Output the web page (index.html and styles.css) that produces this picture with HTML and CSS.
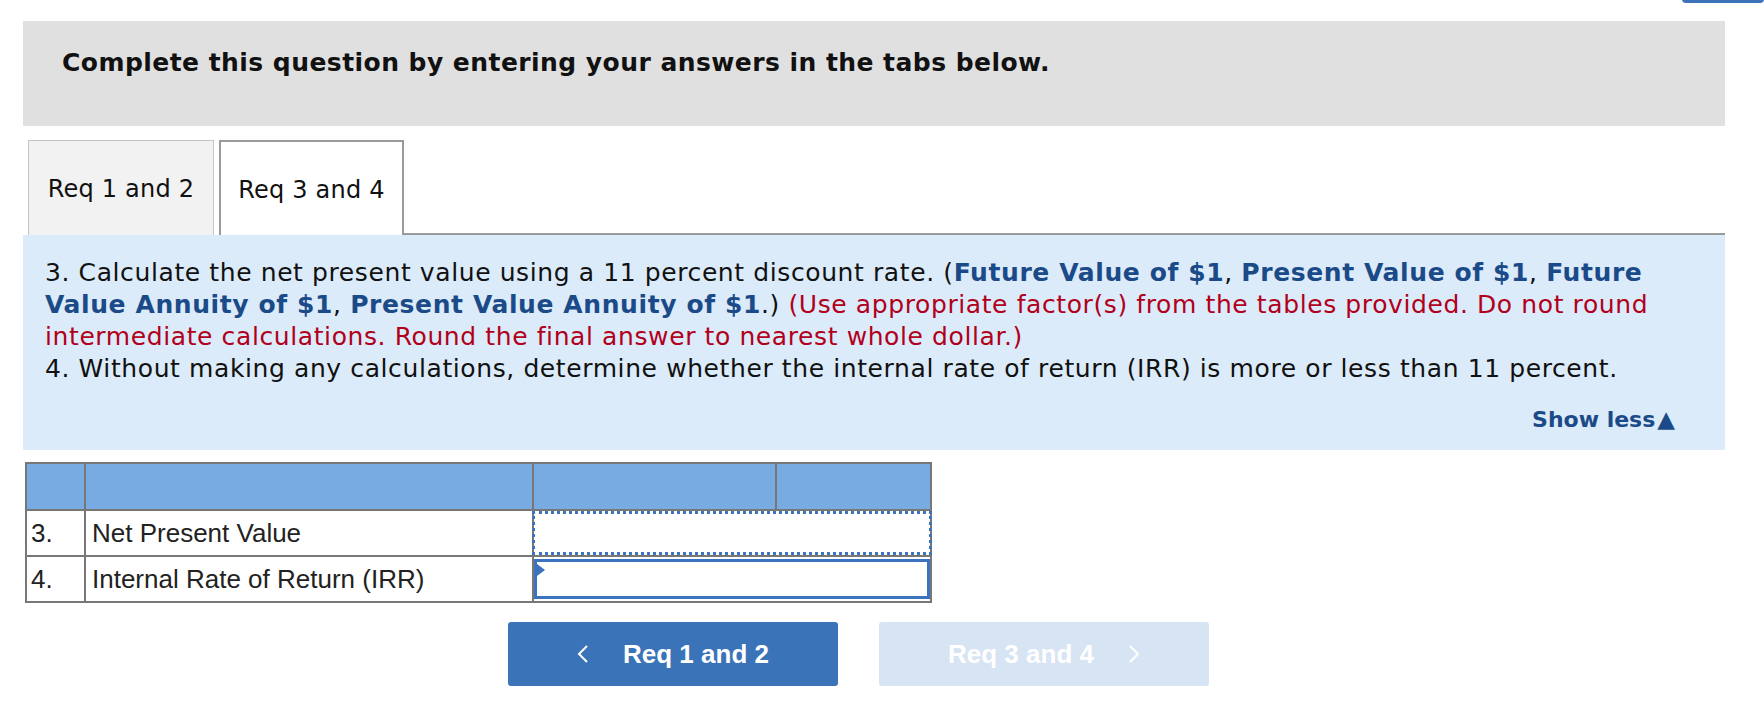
FILE: index.html
```html
<!DOCTYPE html>
<html lang="en">
<head>
    <meta charset="UTF-8">
    <title>Req 3 and 4</title>
    <link rel="stylesheet" href="styles.css">
</head>
<body>

    <!-- Corner of the toolbar button above -->
    <div class="corner-btn"></div>

    <div class="page">

        <!-- Instructions -->
        <div class="instructions">
            Complete this question by entering your answers in the tabs below.
        </div>

        <!-- Tabs -->
        <div class="tabs">
            <div class="tab">Req 1 and 2</div>
            <div class="tab active">Req 3 and 4</div>
            <div class="tab-fill"></div>
        </div>

        <!-- Question text -->
        <div class="question">
            <p>3. Calculate the net present value using a 11 percent discount rate. (<b class="link">Future Value of $1</b>, <b class="link">Present Value of $1</b>, <b class="link">Future<br>Value Annuity of $1</b>, <b class="link">Present Value Annuity of $1</b>.) <span class="hint">(Use appropriate factor(s) from the tables provided. Do not round<br>intermediate calculations. Round the final answer to nearest whole dollar.)</span></p>
            <p>4. Without making any calculations, determine whether the internal rate of return (IRR) is more or less than 11 percent.</p>
            <div class="show-less">Show less<span class="arrow">&#9650;</span></div>
        </div>

        <!-- Answer table -->
        <table class="answers">
            <tr class="head">
                <td class="c-num"></td>
                <td class="c-label"></td>
                <td class="c-val"></td>
                <td class="c-extra"></td>
            </tr>
            <tr>
                <td class="c-num">3.</td>
                <td class="c-label">Net Present Value</td>
                <td class="c-input" colspan="2"><div class="field focused"></div></td>
            </tr>
            <tr>
                <td class="c-num">4.</td>
                <td class="c-label">Internal Rate of Return (IRR)</td>
                <td class="c-input" colspan="2"><div class="field selected"></div></td>
            </tr>
        </table>

        <!-- Navigation -->
        <div class="nav">
            <button class="nav-btn prev">
                <svg width="12" height="20" viewBox="0 0 12 20"><polyline points="10,2 2,10 10,18" fill="none" stroke="#fff" stroke-width="2"/></svg>
                <span>Req 1 and 2</span>
            </button>
            <button class="nav-btn next">
                <span>Req 3 and 4</span>
                <svg width="12" height="20" viewBox="0 0 12 20"><polyline points="2,2 10,10 2,18" fill="none" stroke="#fff" stroke-width="2"/></svg>
            </button>
        </div>

    </div>

</body>
</html>
```

FILE: styles.css
```css
/* General */
body {
    margin: 0;
    padding: 0;
    background-color: #fff;
    font-family: "DejaVu Sans", Verdana, sans-serif;
    color: #111;
    position: relative;
}

.corner-btn {
    position: absolute;
    top: -40px;
    right: 0;
    width: 82px;
    height: 43px;
    background-color: #3b73b9;
    border-radius: 4px;
}

.page {
    width: 1702px;
    margin-left: 23px;
    padding-top: 21px;
}

/* Instructions box */
.instructions {
    height: 105px;
    box-sizing: border-box;
    padding: 27px 0 0 39px;
    background-color: #e0e0e0;
    font-weight: bold;
    font-size: 25px;
    letter-spacing: 0.45px;
    line-height: 30px;
}

/* Tabs */
.tabs {
    display: flex;
    margin-top: 14px;
    padding-left: 5px;
}

.tab {
    width: 186px;
    height: 95px;
    box-sizing: border-box;
    display: flex;
    align-items: center;
    justify-content: center;
    padding-top: 2px;
    background-color: #f2f2f2;
    border: 1px solid #c4c4c4;
    border-bottom: none;
    font-size: 24px;
    letter-spacing: 0.2px;
}

.tab.active {
    width: 185px;
    margin-left: 5px;
    background-color: #fff;
    border: 2px solid #9a9a9a;
    border-bottom: none;
}

.tab-fill {
    flex-grow: 1;
    border-bottom: 2px solid #9a9a9a;
}

/* Question panel */
.question {
    background-color: #dbebf9;
    padding: 22px 50px 14px 22px;
    font-size: 25px;
    letter-spacing: 0.6px;
    line-height: 32px;
}

.question p {
    margin: 0;
    white-space: nowrap;
}

.link {
    color: #1b4a88;
}

.hint {
    color: #b1001c;
}

.show-less {
    margin-top: 18px;
    text-align: right;
    font-weight: bold;
    font-size: 22px;
    letter-spacing: 0;
    color: #1b4a88;
}

.show-less .arrow {
    font-size: 23px;
    margin-left: 2px;
}

/* Answer table */
.answers {
    margin: 12px 0 0 2px;
    border-collapse: collapse;
    font-family: "Liberation Sans", Arial, sans-serif;
    font-size: 26px;
    color: #222;
}

.answers td {
    border: 2px solid #777;
    padding: 0;
    height: 44px;
}

.answers .head td {
    height: 45px;
    background-color: #78abe1;
}

.c-num {
    width: 53px;
    padding-left: 4px !important;
}

.c-label {
    width: 440px;
    padding-left: 6px !important;
}

.c-val {
    width: 241px;
}

.c-extra {
    width: 153px;
}

.c-input {
    position: relative;
}

.field {
    height: 40px;
    box-sizing: border-box;
}

.field.focused {
    outline: 3px dotted #3c73bf;
    outline-offset: -1px;
}

.field.selected {
    border: 3px solid #3c73bf;
    position: relative;
}

.field.selected::before {
    content: "";
    position: absolute;
    top: 2px;
    left: 0;
    border-top: 6px solid transparent;
    border-bottom: 6px solid transparent;
    border-left: 8px solid #3c73bf;
}

/* Navigation buttons */
.nav {
    display: flex;
    gap: 41px;
    margin: 19px 0 0 485px;
}

.nav-btn {
    width: 330px;
    height: 64px;
    display: flex;
    align-items: center;
    justify-content: center;
    gap: 34px;
    border: none;
    border-radius: 3px;
    color: #fff;
    font-family: "Liberation Sans", Arial, sans-serif;
    font-weight: bold;
    font-size: 26px;
}

.nav-btn.prev {
    background-color: #3b73b9;
}

.nav-btn.next {
    background-color: #d7e4f3;
}
```
